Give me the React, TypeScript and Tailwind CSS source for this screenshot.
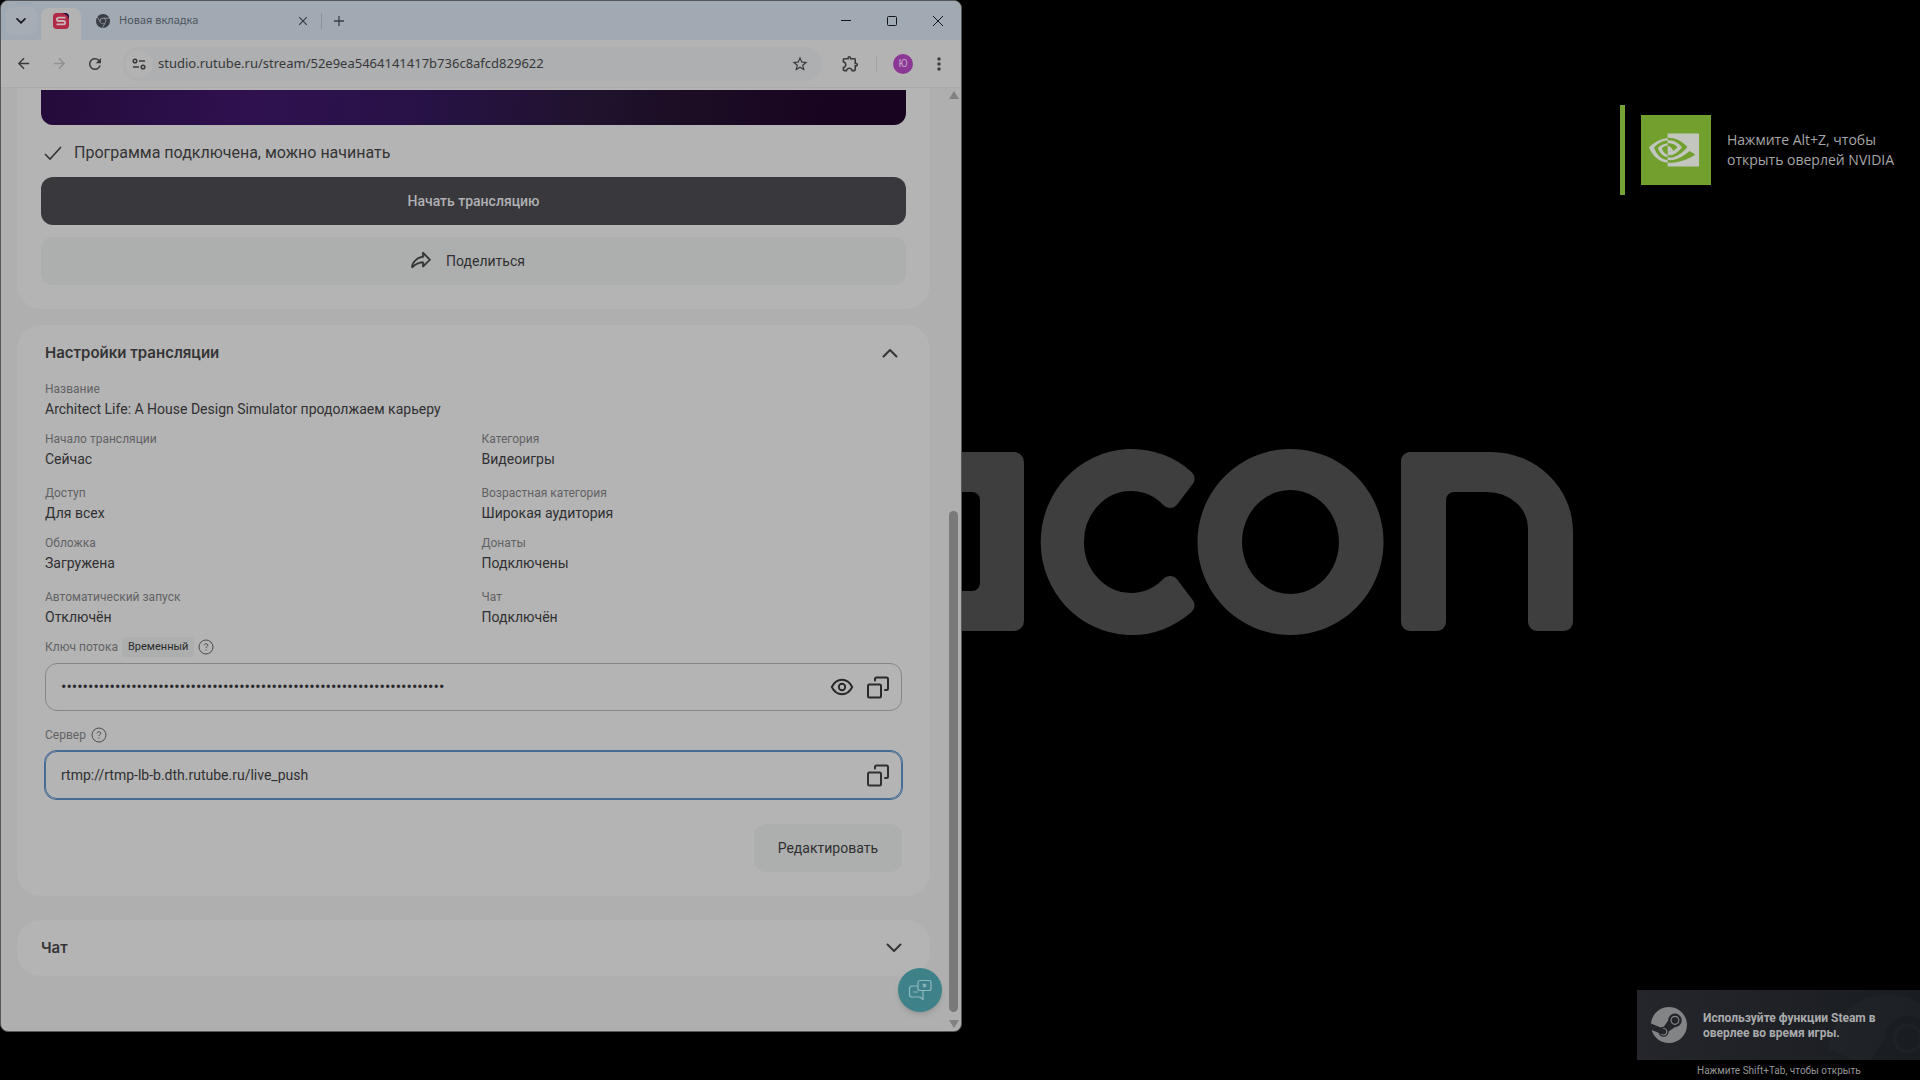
import type { ReactNode } from "react";
import { SiGooglechrome, SiNvidia, SiSteam } from "react-icons/si";
import { MdArrowBack, MdArrowForward, MdRefresh, MdStarOutline, MdOutlineExtension, MdMoreVert } from "react-icons/md";
import { PiShareFat } from "react-icons/pi";

const STREAM_KEY = "x".repeat(71);

function Chevron({ up = false, small = false }: { up?: boolean; small?: boolean }) {
  return (
    <svg
      viewBox="0 0 16 10"
      className={small ? "h-[6px] w-[10px]" : "h-[10px] w-4"}
      fill="none"
      stroke="currentColor"
      strokeWidth={small ? 3 : 2}
      strokeLinecap="round"
      strokeLinejoin="round"
      aria-hidden="true"
    >
      <path d={up ? "M1.5 8.5 8 2l6.500 6.500" : "M1.500 1.500 8 8l6.500-6.500"} />
    </svg>
  );
}

function StudioLogo() {
  return (
    <svg viewBox="0 0 16 16" className="size-4" aria-hidden="true">
      <rect width="16" height="16" rx="4" fill="#b02a45" />
      <path d="M8.500 0H12a4 4 0 0 1 4 4v3.500A8 8 0 0 0 8.500 0z" fill="#1c1440" />
      <path
        d="M12.500 4.600H5.600a1.700 1.700 0 0 0 0 3.400h4.800a1.700 1.700 0 0 1 0 3.400H3.500"
        fill="none"
        stroke="#c9b3b8"
        strokeWidth="1.800"
      />
    </svg>
  );
}

function CopyIcon() {
  return (
    <svg viewBox="0 0 24 24" className="size-6" fill="none" stroke="currentColor" strokeWidth="2" strokeLinecap="round" aria-hidden="true">
      <rect x="2" y="9.500" width="13" height="13" rx="1.500" />
      <path d="M9 5.500V4a1.500 1.500 0 0 1 1.500-1.500h10A1.500 1.500 0 0 1 22 4v9.500a1.500 1.500 0 0 1-1.500 1.500H19" />
    </svg>
  );
}

function EyeIcon() {
  return (
    <svg viewBox="0 0 24 24" className="size-6" fill="none" stroke="currentColor" strokeWidth="1.900" aria-hidden="true">
      <path d="M1.800 12C4 7.500 7.700 4.800 12 4.800S20 7.500 22.200 12C20 16.500 16.300 19.200 12 19.200S4 16.500 1.800 12z" />
      <circle cx="12" cy="12" r="3.200" />
    </svg>
  );
}

function HelpButton({ label }: { label: string }) {
  return (
    <button type="button" aria-label={label} className="text-[#4c4c4e]">
      <svg viewBox="0 0 16 16" className="size-4" fill="none" stroke="currentColor" aria-hidden="true">
        <circle cx="8" cy="8" r="7" />
        <path d="M6.200 6.400C6.200 4.200 9.800 4.300 9.800 6.300 9.800 7.700 8 7.700 8 9" />
        <path d="M8 10.500v1.200" />
      </svg>
    </button>
  );
}

function Field({ label, value }: { label: string; value: string }) {
  return (
    <div>
      <dt className="text-xs leading-5 text-[#626264]">{label}</dt>
      <dd className="text-sm leading-5 text-[#303032]">{value}</dd>
    </div>
  );
}

function ToolButton({ label, children, className = "" }: { label: string; children: ReactNode; className?: string }) {
  return (
    <button type="button" aria-label={label} className={`flex items-center justify-center ${className}`}>
      {children}
    </button>
  );
}

function TabStrip() {
  return (
    <div className="flex h-[39px] items-center bg-[#a1a9b3] text-[#3a3e44]">
      <ToolButton label="Поиск вкладок" className="ml-1 h-7 w-8 rounded-lg bg-[#a6adb5] text-[#1e2024]">
        <Chevron small />
      </ToolButton>
      <div className="ml-1 flex h-8 w-10 items-center justify-center self-end rounded-t-lg bg-[#b3b3b3] pb-[6px]">
        <StudioLogo />
      </div>
      <div className="ml-[15px] flex w-[215px] items-center">
        <SiGooglechrome className="size-[14px]" />
        <span className="ml-[9px] flex-1 font-['Noto_Sans'] text-[11px] text-[#4f555c]">Новая вкладка</span>
        <ToolButton label="Закрыть вкладку" className="size-4">
          <svg viewBox="0 0 8 8" className="size-2" stroke="currentColor" strokeWidth="1.200" aria-hidden="true">
            <path d="M0 0l8 8M8 0L0 8" />
          </svg>
        </ToolButton>
      </div>
      <div className="ml-[10px] h-4 w-px bg-[#8c939c]" />
      <ToolButton label="Новая вкладка" className="ml-[7px] size-5">
        <svg viewBox="0 0 10 10" className="size-[10px]" stroke="currentColor" strokeWidth="1.300" aria-hidden="true">
          <path d="M5 0v10M0 5h10" />
        </svg>
      </ToolButton>
      <div className="ml-auto flex text-[#15171a]">
        <ToolButton label="Свернуть" className="h-9 w-[46px]">
          <svg viewBox="0 0 10 10" className="size-[10px]" stroke="currentColor" aria-hidden="true">
            <path d="M0 4.500h10" />
          </svg>
        </ToolButton>
        <ToolButton label="Развернуть" className="h-9 w-[46px]">
          <svg viewBox="0 0 10 10" className="size-[10px]" fill="none" stroke="currentColor" aria-hidden="true">
            <rect x="0.500" y="0.500" width="9" height="9" rx="1" />
          </svg>
        </ToolButton>
        <ToolButton label="Закрыть" className="h-9 w-[46px]">
          <svg viewBox="0 0 10 10" className="size-[10px]" stroke="currentColor" aria-hidden="true">
            <path d="M0 0l10 10M10 0L0 10" />
          </svg>
        </ToolButton>
      </div>
    </div>
  );
}

function Toolbar() {
  return (
    <div className="flex h-12 items-center border-b border-[#aaaaab] bg-[#b3b3b3] text-[#3a3b3d]">
      <ToolButton label="Назад" className="ml-[6px] size-8">
        <MdArrowBack className="size-[17px]" />
      </ToolButton>
      <ToolButton label="Вперёд" className="ml-1 size-8 text-[#8f9091]">
        <MdArrowForward className="size-[17px]" />
      </ToolButton>
      <ToolButton label="Обновить" className="ml-1 size-8">
        <MdRefresh className="size-[18px]" />
      </ToolButton>
      <div className="ml-3 flex h-[34px] flex-1 items-center rounded-full bg-[#aeafb0]">
        <ToolButton label="Сведения о сайте" className="ml-[2px] size-7 rounded-full bg-[#b3b3b3]">
          <svg viewBox="0 0 14 12" className="h-3 w-[14px]" fill="none" stroke="currentColor" strokeWidth="1.500" aria-hidden="true">
            <circle cx="3" cy="3" r="1.800" />
            <path d="M7 3h6M1 9h6" />
            <circle cx="11" cy="9" r="1.800" />
          </svg>
        </ToolButton>
        <input
          aria-label="Адресная строка"
          readOnly
          value="studio.rutube.ru/stream/52e9ea5464141417b736c8afcd829622"
          className="ml-[5px] min-w-0 flex-1 bg-transparent font-['Noto_Sans'] text-[13px] text-[#36383a] outline-none"
        />
        <ToolButton label="Добавить в закладки" className="mr-[10px] size-6">
          <MdStarOutline className="size-[18px]" />
        </ToolButton>
      </div>
      <ToolButton label="Расширения" className="ml-[14px] size-7">
        <MdOutlineExtension className="size-[19px]" />
      </ToolButton>
      <div className="ml-3 h-4 w-px bg-[#a0a4a9]" />
      <ToolButton label="Профиль" className="ml-4 size-5 rounded-full bg-[#8c3796] font-['Roboto'] text-[10px] text-[#c5a9c9]">
        Ю
      </ToolButton>
      <ToolButton label="Меню" className="mr-3 ml-4 size-5">
        <MdMoreVert className="size-5" />
      </ToolButton>
    </div>
  );
}

function StreamCard() {
  return (
    <section className="rounded-b-3xl bg-[#b4b4b4] px-6 pt-[2px] pb-6">
      <div className="h-[35px] rounded-b-xl bg-[linear-gradient(95deg,#240b3a_0%,#2f1150_25%,#271245_45%,#21122f_62%,#1c0d24_75%,#180320_92%)]" />
      <p className="mt-[15px] flex h-[26px] items-center text-base text-[#343436]">
        <svg viewBox="0 0 18 16" className="mr-3 ml-[3px] h-4 w-[18px]" fill="none" stroke="currentColor" strokeWidth="1.600" aria-hidden="true">
          <path d="M1 9l5 5L17 2" />
        </svg>
        Программа подключена, можно начинать
      </p>
      <button type="button" className="mt-[11px] h-12 w-full rounded-xl bg-[#39393d] text-sm font-medium text-[#b0b0b4]">
        Начать трансляцию
      </button>
      <button type="button" className="mt-3 flex h-12 w-full items-center justify-center gap-[14px] rounded-xl bg-[#adafae] pr-3 text-sm text-[#303032]">
        <PiShareFat className="size-[22px]" stroke="currentColor" strokeWidth="6" />
        Поделиться
      </button>
    </section>
  );
}

function SettingsCard() {
  return (
    <section className="mt-4 rounded-3xl bg-[#b4b4b4] px-7 pt-4 pb-6">
      <h2>
        <button type="button" aria-expanded="true" className="flex h-6 w-full items-center justify-between pr-1 font-['Inter'] text-[15px] font-semibold text-[#343436]">
          Настройки трансляции
          <Chevron up />
        </button>
      </h2>
      <dl className="mt-[14px] flex flex-col gap-[10px]">
        <Field label="Название" value="Architect Life: A House Design Simulator продолжаем карьеру" />
        <div className="grid grid-cols-2 gap-x-4 gap-y-[14px]">
          <Field label="Начало трансляции" value="Сейчас" />
          <Field label="Категория" value="Видеоигры" />
          <Field label="Доступ" value="Для всех" />
          <Field label="Возрастная категория" value="Широкая аудитория" />
        </div>
        <div className="grid grid-cols-2 gap-x-4 gap-y-[14px]">
          <Field label="Обложка" value="Загружена" />
          <Field label="Донаты" value="Подключены" />
          <Field label="Автоматический запуск" value="Отключён" />
          <Field label="Чат" value="Подключён" />
        </div>
      </dl>
      <div className="mt-[10px] flex h-5 items-center text-xs text-[#626264]">
        <label htmlFor="stream-key">Ключ потока</label>
        <span className="mx-1 rounded bg-[#adafae] px-[6px] text-[11px] leading-5 text-[#29292b]">Временный</span>
        <HelpButton label="Что такое ключ потока" />
      </div>
      <div className="mt-[6px] flex h-12 items-center rounded-xl border border-[#868688] px-[11px] text-[#29292b]">
        <input id="stream-key" type="password" readOnly value={STREAM_KEY} className="min-w-0 flex-1 bg-transparent pl-1 text-base outline-none" />
        <button type="button" aria-label="Показать ключ">
          <EyeIcon />
        </button>
        <button type="button" aria-label="Скопировать ключ" className="ml-3">
          <CopyIcon />
        </button>
      </div>
      <div className="mt-[14px] flex h-5 items-center gap-[5px] text-xs text-[#626264]">
        <label htmlFor="server">Сервер</label>
        <HelpButton label="Что такое сервер" />
      </div>
      <div className="mt-[6px] flex h-12 items-center rounded-xl border border-[#476c93] px-[11px] text-[#303032] ring-1 ring-[#476c93]">
        <input id="server" type="text" readOnly value="rtmp://rtmp-lb-b.dth.rutube.ru/live_push" className="min-w-0 flex-1 bg-transparent pl-1 text-sm outline-none" />
        <button type="button" aria-label="Скопировать адрес сервера" className="ml-3">
          <CopyIcon />
        </button>
      </div>
      <button type="button" className="mt-[25px] ml-auto block h-12 rounded-xl bg-[#adafae] px-6 text-sm text-[#303032]">
        Редактировать
      </button>
    </section>
  );
}

function BrowserWindow() {
  return (
    <div className="relative z-10 flex h-[calc(100vh-48px)] w-[calc(50%+2px)] shrink-0 flex-col overflow-hidden rounded-lg border border-[#55575b] bg-[#afafaf]">
      <TabStrip />
      <Toolbar />
      <div className="flex min-h-0 flex-1">
        <main className="relative min-w-0 flex-1 overflow-hidden px-4 font-['Roboto']">
          <StreamCard />
          <SettingsCard />
          <section className="mt-6 rounded-3xl bg-[#b4b4b4] px-6 py-4">
            <h2>
              <button type="button" aria-expanded="false" className="flex h-6 w-full items-center justify-between pr-1 font-['Inter'] text-[15px] font-semibold text-[#343436]">
                Чат
                <Chevron />
              </button>
            </h2>
          </section>
          <button
            type="button"
            aria-label="Чат поддержки"
            className="absolute right-1 bottom-[19px] flex size-11 items-center justify-center rounded-full bg-[#3f8188] text-[#8fb9bc] shadow-md shadow-black/10"
          >
            <svg viewBox="0 0 24 22" className="h-[22px] w-6" fill="none" stroke="currentColor" strokeWidth="1.200" strokeLinejoin="round" aria-hidden="true">
              <rect x="10" y="1.500" width="13" height="10" rx="2" />
              <path d="M10 7H4a2.500 2.500 0 0 0-2.500 2.500v6A2.500 2.500 0 0 0 4 18h8l3 2.500V11.500" />
              <path d="M16.500 4.500v4M14.800 5.500l3.400 2M18.200 5.500l-3.400 2M5 13h5" />
            </svg>
          </button>
        </main>
        <div className="flex w-[15px] flex-col items-center py-[3px] text-[#828284]" aria-hidden="true">
          <svg viewBox="0 0 10 8" className="h-2 w-[10px]" fill="currentColor">
            <path d="M5 0l5 8H0z" />
          </svg>
          <div className="grow-[42]" />
          <div className="w-[9px] grow-[51] rounded-full bg-[#7a7a7a]" />
          <svg viewBox="0 0 10 8" className="mt-2 h-2 w-[10px]" fill="currentColor">
            <path d="M5 8l5-8H0z" />
          </svg>
        </div>
      </div>
    </div>
  );
}

function GameSplash() {
  return (
    <div className="flex min-w-0 flex-1 items-center overflow-hidden pt-[3px]" role="img" aria-label="nacon">
      <svg viewBox="0 0 612 186" className="h-[186px] w-[612px] shrink-0" fill="#3e3e3e">
        <path fillRule="evenodd" d="M-40 3H52a10 10 0 0 1 10 10V172a10 10 0 0 1-10 10H-40zM-40 43H10a8 8 0 0 1 8 8V134a8 8 0 0 1-8 8H-40z" />
        <path
          d="M223.500 29.600A82 84 0 1 0 223.500 156.400L208 136A56 60 0 1 1 208 50z"
          stroke="#3e3e3e"
          strokeWidth="18"
          strokeLinejoin="round"
        />
        <path fillRule="evenodd" d="M328.500 0a93 93 0 1 0 .01 0zM328.500 41a48.500 52 0 1 1-.01 0z" />
        <rect x="439" y="3" width="45" height="179" rx="9" />
        <rect x="566" y="90" width="45" height="92" rx="9" />
        <path d="M449 3H529A82 80 0 0 1 611 83V150H566V79A41 36 0 0 0 525 43H492A8 8 0 0 0 484 51V90H439V13A10 10 0 0 1 449 3z" />
      </svg>
    </div>
  );
}

function NvidiaToast() {
  return (
    <aside className="absolute top-[105px] right-0 flex h-[90px] w-[300px] items-center border-l-[5px] border-[#76a335] pl-4 font-['Open_Sans']">
      <div className="flex size-[70px] shrink-0 items-center justify-center bg-[#72a02f] pr-1 text-[#c3c6bf]">
        <SiNvidia className="size-[50px]" />
      </div>
      <p className="ml-4 text-sm leading-5 font-medium text-[#a6a6a6]">
        Нажмите Alt+Z, чтобы
        <br />
        открыть оверлей NVIDIA
      </p>
    </aside>
  );
}

function SteamToast() {
  return (
    <aside className="absolute right-0 bottom-0 w-[283px] font-['Roboto']">
      <div className="relative flex h-[70px] items-center overflow-hidden bg-linear-to-r from-[#24262b] to-[#191c21] pl-[14px]">
        <SiSteam className="absolute top-1 -right-7 size-[120px] text-white/2" aria-hidden="true" />
        <SiSteam className="size-9 text-[#838486]" />
        <p className="ml-4 pt-[2px] text-xs leading-[15px] font-bold text-[#a9aaac]">
          Используйте функции Steam в
          <br />
          оверлее во время игры.
        </p>
      </div>
      <p className="h-5 pl-[60px] text-[10px] leading-[22px] text-[#959596]">Нажмите Shift+Tab, чтобы открыть</p>
    </aside>
  );
}

export default function App() {
  return (
    <div className="relative flex h-screen overflow-hidden bg-black">
      <BrowserWindow />
      <GameSplash />
      <NvidiaToast />
      <SteamToast />
    </div>
  );
}
